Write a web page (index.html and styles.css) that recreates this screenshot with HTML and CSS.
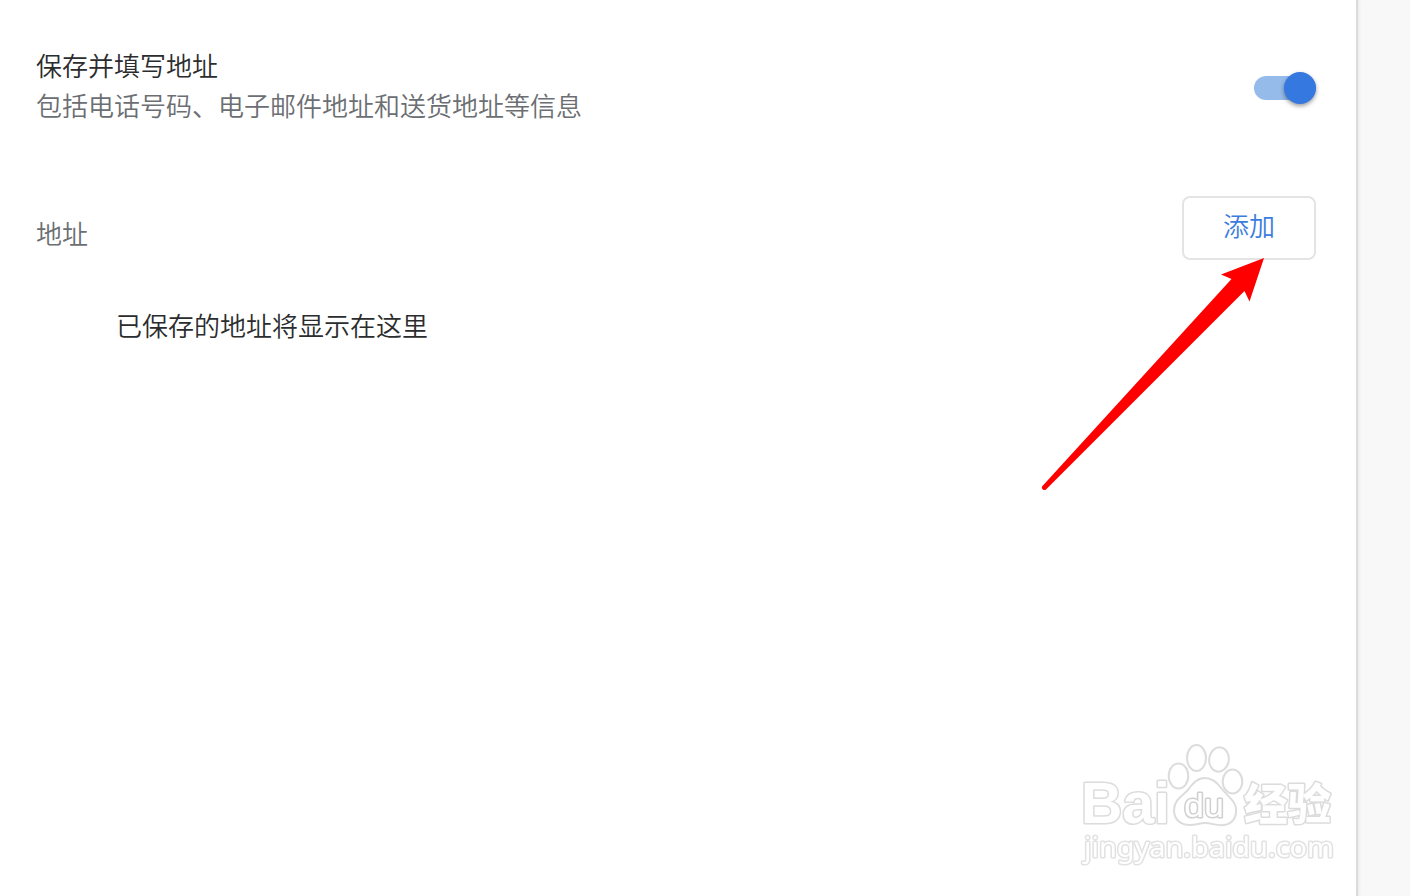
FILE: index.html
```html
<!DOCTYPE html>
<html lang="zh-CN">
<head>
<meta charset="utf-8">
<title>地址</title>
<link rel="stylesheet" href="styles.css">
</head>
<body>
<main class="panel">
  <section class="row setting">
    <div class="labels">
      <div class="title">保存并填写地址</div>
      <div class="subtitle">包括电话号码、电子邮件地址和送货地址等信息</div>
    </div>
    <div class="toggle" role="switch" aria-checked="true"><span class="knob"></span></div>
  </section>
  <section class="row heading">
    <div class="subtitle list-label">地址</div>
    <button class="add">添加</button>
  </section>
  <p class="empty">已保存的地址将显示在这里</p>
</main>
<svg class="arrow" width="230" height="240" viewBox="1038 254 230 240">
  <path d="M1264 258 L1221 274.500 L1231.500 279 L1042 486.500 A2.600 2.600 0 0 0 1046 489.500 L1244.500 291 L1249.500 301.500 Z" fill="#f00"/>
</svg>
<svg class="watermark" width="280" height="140" viewBox="1070 735 280 140">
  <g class="mark">
    <text class="latin" x="1081" y="823" font-size="57" textLength="89" lengthAdjust="spacingAndGlyphs">Bai</text>
    <ellipse cx="1178.500" cy="776" rx="9.800" ry="12.500"/>
    <ellipse cx="1196.500" cy="758" rx="9.500" ry="13"/>
    <ellipse cx="1219" cy="759.500" rx="9.800" ry="12.200" transform="rotate(8 1219 759.500)"/>
    <ellipse cx="1232.500" cy="781.500" rx="9.800" ry="12"/>
    <path d="M1205 778 C1196 778 1192 785 1187 791 C1182 796 1174 800 1174 810 C1174 820 1181 825 1190 825 C1197 825 1199 823 1205 823 C1212 823 1216 826 1224 825 C1232 824 1237 818 1236 808 C1235 800 1227 796 1222 789 C1217 782 1212 778 1205 778 Z"/>
    <text class="du" x="1184" y="817" font-size="34" textLength="40" lengthAdjust="spacingAndGlyphs">du</text>
    <text class="cjk" x="1244" y="820" font-size="43" textLength="87" lengthAdjust="spacingAndGlyphs">经验</text>
    <text class="url" x="1084" y="857" font-size="28" textLength="250" lengthAdjust="spacingAndGlyphs">jingyan.baidu.com</text>
  </g>
</svg>
</body>
</html>
```
FILE: styles.css
```css
* { box-sizing: border-box; }
body {
  margin: 0;
  height: 896px;
  overflow: hidden;
  background: #f8f8f8;
  font-family: "Noto Sans CJK SC", sans-serif;
  font-size: 26px;
  line-height: 40px;
  color: #2b2c2e;
}
.panel {
  width: 1356px;
  height: 896px;
  padding: 45px 40px 0 36px;
  background: #fff;
  box-shadow: 1px 0 1px 1px #dcdcdc, 2px 0 4px #e4e4e4;
}
.row {
  display: flex;
  justify-content: space-between;
}
.title, .subtitle, .empty, .add { font-weight: 350; }
.subtitle { color: #6b6e72; }
.toggle {
  display: flex;
  align-items: center;
  justify-content: flex-end;
  width: 62px;
  height: 24px;
  margin-top: 31px;
  border-radius: 12px;
  background: #94bbea;
}
.knob {
  width: 32px;
  height: 32px;
  border-radius: 50%;
  background: #3578e0;
  box-shadow: 0 2px 4px rgba(0, 0, 0, .4);
}
.heading { margin-top: 71px; }
.list-label { padding-top: 17px; }
.add {
  width: 134px;
  height: 64px;
  padding: 0 0 6px;
  border: 2px solid #e4e4e4;
  border-radius: 8px;
  background: #fff;
  color: #3b7ddd;
  font-family: inherit;
  font-size: 26px;
  line-height: 40px;
}
.empty { margin: 45px 0 0 80px; }
.arrow {
  position: absolute;
  left: 1038px;
  top: 254px;
}
.watermark {
  position: absolute;
  left: 1070px;
  top: 735px;
}
.mark {
  fill: #fff;
  stroke: #dcdcdc;
  stroke-width: 2px;
  stroke-linejoin: round;
  filter: blur(.4px);
}
.mark text { paint-order: stroke; }
.latin {
  font-family: "Liberation Sans", sans-serif;
  font-weight: 700;
  stroke-width: 3px;
}
.du {
  font-family: "Liberation Sans", sans-serif;
  stroke-width: 3px;
  stroke: #d0d0d0;
}
.cjk {
  font-family: "Noto Sans CJK SC", sans-serif;
  font-weight: 900;
  stroke-width: 3px;
}
.url {
  font-family: "Noto Sans", sans-serif;
  stroke-width: 3px;
  stroke: #e2e2e2;
}
```
